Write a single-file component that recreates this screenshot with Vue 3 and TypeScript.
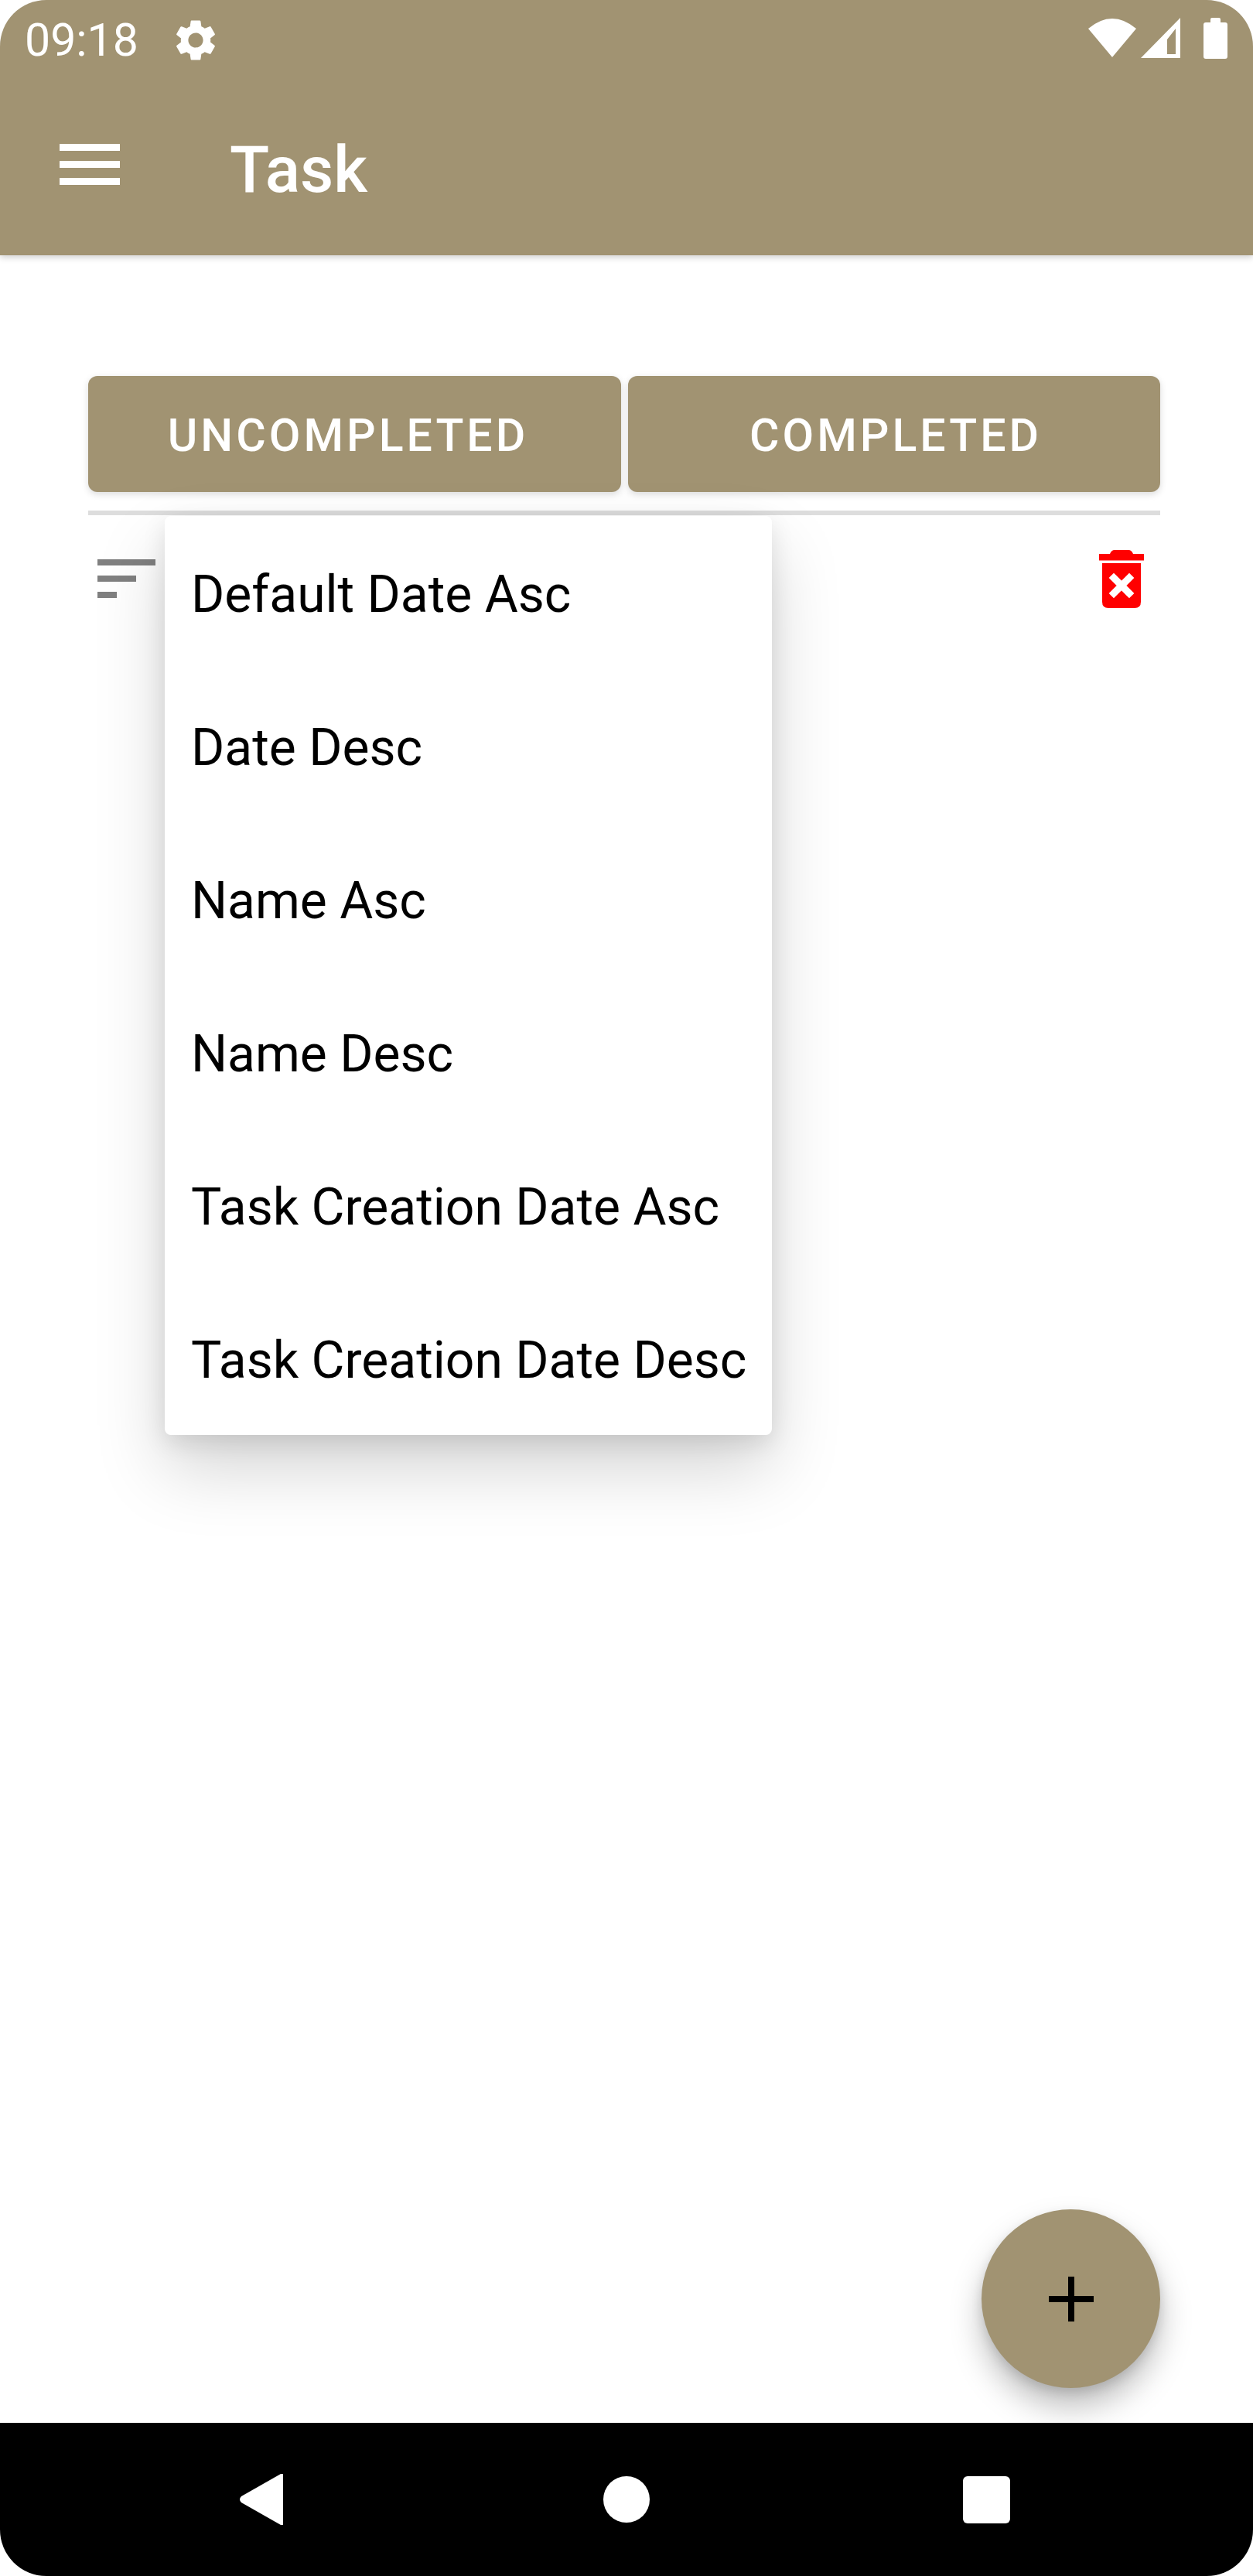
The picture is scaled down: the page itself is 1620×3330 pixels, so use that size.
<script setup lang="ts">
const sortOptions: string[] = [
  'Default Date Asc',
  'Date Desc',
  'Name Asc',
  'Name Desc',
  'Task Creation Date Asc',
  'Task Creation Date Desc',
]
</script>

<template>
  <div class="screen">
    <header class="header">
      <div class="status">
        <span class="time">09:18</span>
        <svg class="gear" width="64" height="64" viewBox="0 0 24 24">
          <path fill="#fff" d="M19.14 12.94c.04-.3.06-.61.06-.94 0-.32-.02-.64-.07-.94l2.03-1.58a.49.49 0 0 0 .12-.61l-1.92-3.32a.488.488 0 0 0-.59-.22l-2.39.96c-.5-.38-1.03-.7-1.62-.94l-.36-2.54a.484.484 0 0 0-.48-.41h-3.84c-.24 0-.43.17-.47.41l-.36 2.54c-.59.24-1.13.57-1.62.94l-2.39-.96c-.22-.08-.47 0-.59.22L2.74 8.87c-.12.21-.08.47.12.61l2.03 1.58c-.05.3-.09.63-.09.94s.02.64.07.94l-2.03 1.58a.49.49 0 0 0-.12.61l1.92 3.32c.12.22.37.29.59.22l2.39-.96c.5.38 1.03.7 1.62.94l.36 2.54c.05.24.24.41.48.41h3.84c.24 0 .44-.17.47-.41l.36-2.54c.59-.24 1.13-.56 1.62-.94l2.39.96c.22.08.47 0 .59-.22l1.92-3.32c.12-.22.07-.47-.12-.61l-2.01-1.58zM12 15.6c-1.98 0-3.6-1.62-3.6-3.6s1.62-3.6 3.6-3.6 3.6 1.62 3.6 3.6-1.62 3.6-3.6 3.6z" />
        </svg>
        <svg class="status-right" width="185" height="60" viewBox="1405 20 185 60">
          <path fill="#fff" d="M1407 37 Q1438 11 1469 37 L1438 74 Z" />
          <path fill="#fff" fill-rule="evenodd" d="M1475 75 L1526 23 V75 Z M1509 51 V70 H1520 V37 Z" />
          <path fill="#fff" d="M1565 29 V25 Q1565 23 1567 23 H1576 Q1578 23 1578 25 V29 H1584 Q1587 29 1587 32 V73 Q1587 76 1584 76 H1559 Q1556 76 1556 73 V32 Q1556 29 1559 29 Z" />
        </svg>
      </div>
      <div class="toolbar">
        <div class="burger"><i></i><i></i><i></i></div>
        <h1 class="title">Task</h1>
      </div>
    </header>

    <main class="main">
      <div class="tabs">
        <button class="tab tab-left">UNCOMPLETED</button>
        <button class="tab tab-right">COMPLETED</button>
      </div>
      <div class="divider"></div>
      <div class="actions">
        <div class="sort"><i class="s1"></i><i class="s2"></i><i class="s3"></i></div>
        <svg class="trash" width="60" height="76" viewBox="1421 711 60 76">
          <path fill="#f00" d="M1422 716 H1436 Q1438 711 1442 711 H1460 Q1464 711 1466 716 H1480 V724.5 H1422 Z" />
          <path fill="#f00" d="M1426 728 H1476 V778 Q1476 786 1468 786 H1434 Q1426 786 1426 778 Z" />
          <path stroke="#fff" stroke-width="9" stroke-linecap="square" d="M1441 747 L1461 767 M1461 747 L1441 767" />
        </svg>
      </div>

      <ul class="menu">
        <li v-for="option in sortOptions" :key="option" class="menu-item">{{ option }}</li>
      </ul>

      <button class="fab" aria-label="Add">
        <svg width="58" height="58" viewBox="0 0 58 58">
          <path fill="#000" d="M25 0 H33 V25 H58 V33 H33 V58 H25 V33 H0 V25 H25 Z" />
        </svg>
      </button>
    </main>

    <nav class="nav">
      <svg width="56" height="66" viewBox="0 0 56 66">
        <path fill="#fff" d="M56 0 V66 L53 66 L2 37 Q-2 33 2 29 L53 0 Z" />
      </svg>
      <span class="home"></span>
      <span class="recent"></span>
    </nav>
  </div>
</template>

<style>
html,
body {
  margin: 0;
  background: #fff;
}
</style>

<style scoped>
.screen {
  width: 1620px;
  height: 3330px;
  display: flex;
  flex-direction: column;
  border-radius: 60px;
  overflow: hidden;
  background: #fff;
  font-family: Roboto, "Liberation Sans", sans-serif;
  position: relative;
}
.header {
  height: 330px;
  flex: none;
  background: #a19372;
  box-shadow: 0 3px 8px rgba(0, 0, 0, 0.18);
  position: relative;
  z-index: 1;
  color: #fff;
}
.status {
  height: 104px;
  display: flex;
  align-items: center;
  padding-left: 32px;
  padding-right: 30px;
}
.time {
  font-size: 59px;
  line-height: 104px;
  width: 189px;
}
.gear {
  flex: none;
}
.status-right {
  margin-left: auto;
  margin-top: -4px;
}
.toolbar {
  display: flex;
  align-items: center;
  height: 226px;
  padding-left: 77px;
  box-sizing: border-box;
  padding-bottom: 10px;
}
.burger {
  width: 78px;
  display: flex;
  flex-direction: column;
  gap: 13px;
}
.burger i {
  height: 9px;
  background: #fff;
  display: block;
}
.title {
  margin: 16px 0 0 142px;
  font-size: 84px;
  font-weight: 500;
  line-height: 100px;
}
.main {
  flex: 1;
  padding: 156px 120px 0 114px;
  position: relative;
}
.tabs {
  display: grid;
  grid-template-columns: 689px 688px;
  gap: 9px;
}
.tab {
  height: 150px;
  border: 0;
  border-radius: 12px;
  background: #a19372;
  color: #fff;
  font-family: inherit;
  font-size: 59px;
  font-weight: 500;
  letter-spacing: 4px;
  box-shadow: 0 3px 10px rgba(0, 0, 0, 0.14);
}
.tab-left {
  padding: 3px 17px 0 0;
}
.tab-right {
  padding: 3px 0 0 4px;
}
.divider {
  height: 6px;
  margin-top: 24px;
  background: #ddd;
}
.actions {
  display: flex;
  justify-content: space-between;
  align-items: flex-start;
  padding: 45px 20px 0 12px;
}
.sort {
  margin-top: 12px;
  display: flex;
  flex-direction: column;
  gap: 13px;
}
.sort i {
  display: block;
  height: 8px;
  background: #808080;
}
.s1 {
  width: 75px;
}
.s2 {
  width: 50px;
}
.s3 {
  width: 25px;
}
.menu {
  position: absolute;
  left: 213px;
  top: 337px;
  width: 785px;
  margin: 0;
  padding: 0;
  list-style: none;
  background: #fff;
  border-radius: 8px;
  z-index: 2;
  box-shadow: 0 44px 90px rgba(0, 0, 0, 0.17), 0 10px 30px rgba(0, 0, 0, 0.1);
}
.menu-item {
  height: 198px;
  line-height: 204px;
  padding-left: 34px;
  font-size: 66px;
  color: #000;
  white-space: nowrap;
}
.fab {
  position: absolute;
  left: 1269px;
  top: 2526px;
  width: 231px;
  height: 231px;
  border: 0;
  padding: 0;
  border-radius: 50%;
  background: #a19372;
  display: flex;
  align-items: center;
  justify-content: center;
  box-shadow: 0 24px 40px rgba(0, 0, 0, 0.26), 0 6px 14px rgba(0, 0, 0, 0.12);
}
.nav {
  height: 198px;
  flex: none;
  background: #000;
  position: relative;
  display: flex;
  align-items: center;
  padding-left: 310px;
  box-sizing: border-box;
}
.home {
  width: 60px;
  height: 60px;
  border-radius: 50%;
  background: #fff;
  margin-left: 414px;
}
.recent {
  width: 61px;
  height: 61px;
  border-radius: 6px;
  background: #fff;
  margin-left: 405px;
}
</style>
